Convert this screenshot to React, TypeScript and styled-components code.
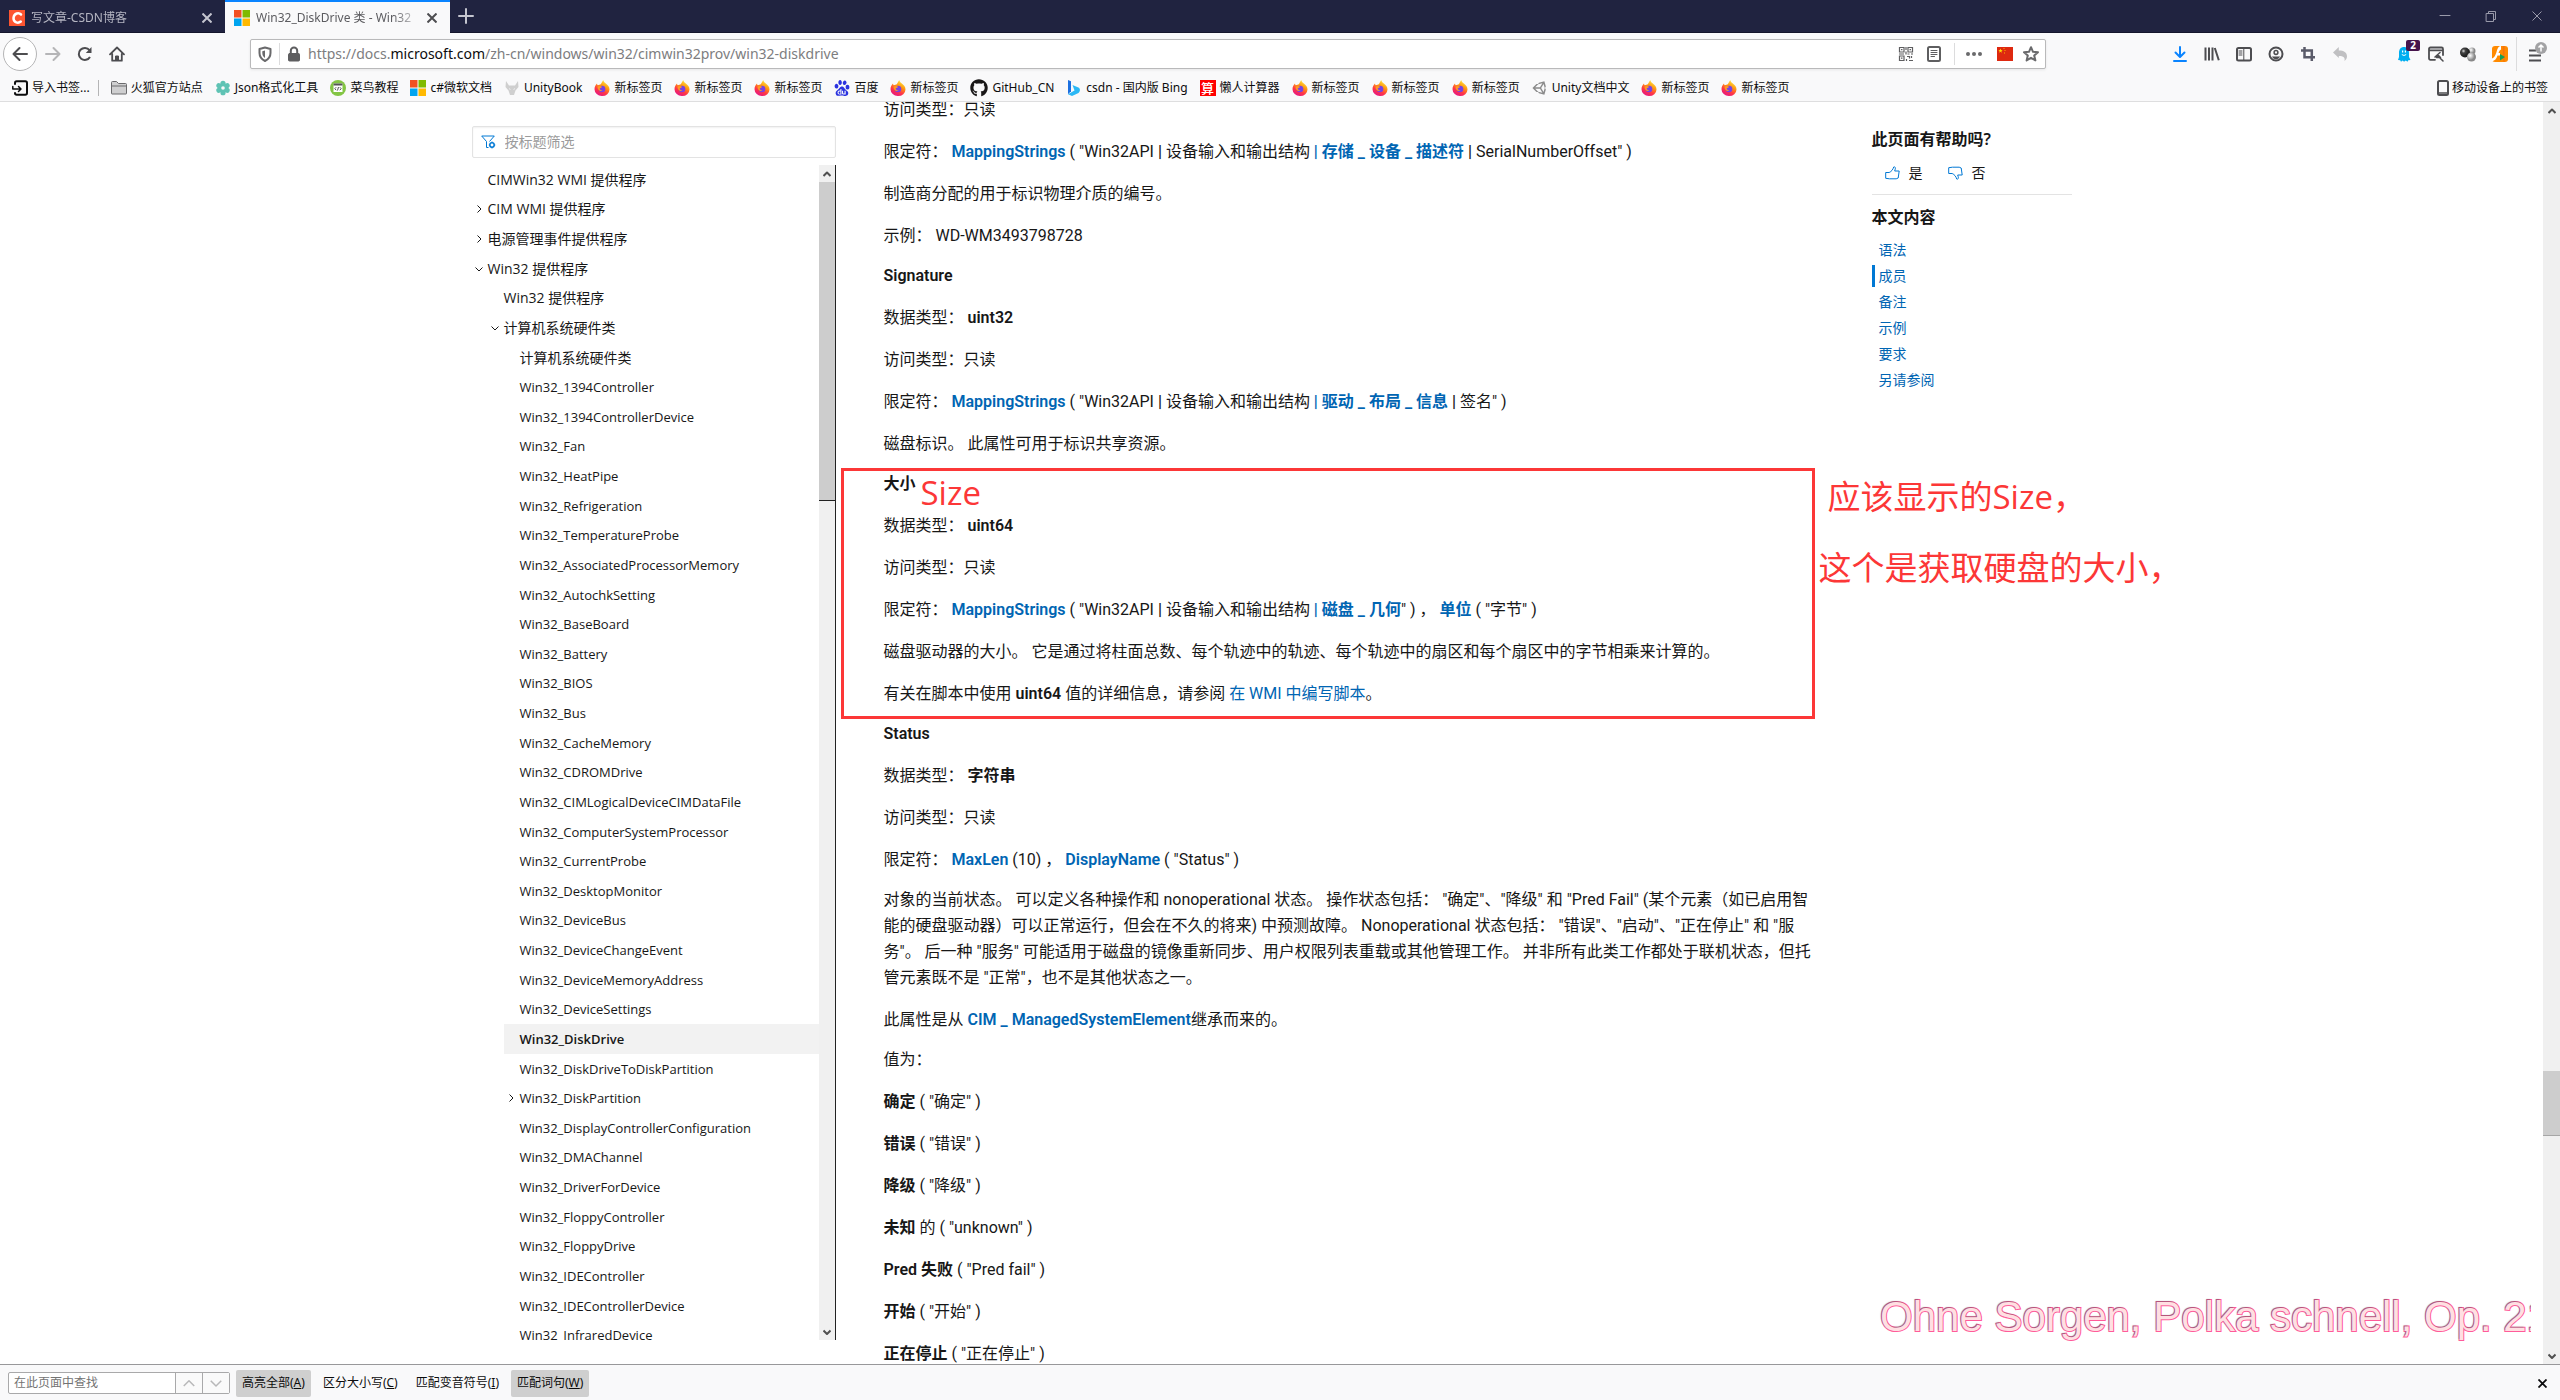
import React from 'react';
import styled, { createGlobalStyle, css } from 'styled-components';
import { FaGithub, FaUnity } from 'react-icons/fa';
import { SiBaidu } from 'react-icons/si';

const GlobalStyle = createGlobalStyle`
  * { box-sizing: border-box; }
  body {
    margin: 0;
    overflow: hidden;
    background: #fff;
    color: #171717;
    text-spacing-trim: space-all;
  }
  button, input { font: inherit; color: inherit; }
  button { border: 0; padding: 0; background: none; }
  a { color: inherit; text-decoration: none; }
  svg { display: block; flex: none; }
`;

const uiFont = `'Noto Sans', 'Noto Sans CJK SC', sans-serif`;
const docFont = `Roboto, 'Noto Sans CJK SC', sans-serif`;
const treeFont = `'Open Sans', 'Noto Sans CJK SC', sans-serif`;

/* ---------- window ---------- */

const Window = styled.div`
  display: flex;
  flex-direction: column;
  height: 100vh;
  font-family: ${uiFont};
  font-size: 12px;
  line-height: 16px;
`;

const TabStrip = styled.header`
  display: flex;
  flex: none;
  height: 33px;
  background: #202340;
  border-bottom: 1px solid #14162c;
`;

const Tab = styled.div<{ $active?: boolean }>`
  display: flex;
  align-items: center;
  gap: 6px;
  width: 225px;
  height: 33px;
  padding: 0 10px 0 9px;
  color: #b4b5c1;
  border-top: 2px solid transparent;
  ${(p) => p.$active && css`
    background: #f9f9fa;
    color: #5c5c60;
    border-top-color: #0a84ff;
  `}
`;

const TabTitle = styled.span`
  flex: 1;
  overflow: hidden;
  white-space: nowrap;
  mask-image: linear-gradient(to right, #000 84%, transparent 104%);
`;

const IconButton = styled.button<{ $w?: number; $color?: string }>`
  position: relative;
  display: grid;
  place-items: center;
  flex: none;
  width: ${(p) => p.$w ?? 32}px;
  height: 32px;
  color: ${(p) => p.$color ?? '#4d4d50'};
`;

const Spacer = styled.div`
  flex: 1;
`;

const ToolGap = styled.div`
  flex: none;
  width: 32px;
`;

const NavBar = styled.nav`
  display: flex;
  flex: none;
  align-items: center;
  height: 41px;
  padding: 0 3px;
  background: #f9f9fa;
`;

const BackButton = styled.button`
  display: grid;
  place-items: center;
  width: 34px;
  height: 34px;
  border: 1px solid #b5b5b6;
  border-radius: 50%;
  background: #fff;
  color: #4d4d50;
`;

const UrlBar = styled.div`
  display: flex;
  flex: 1;
  align-items: center;
  height: 30px;
  margin: 0 118px 0 117px;
  border: 1px solid #b9b9ba;
  border-radius: 2px;
  background: #fff;
  box-shadow: 0 1px 3px rgba(0, 0, 0, 0.08);
`;

const Address = styled.div`
  flex: 1;
  font-size: 14px;
  line-height: 20px;
  white-space: nowrap;
  color: #7d7d80;
  strong { font-weight: 400; color: #0c0c0d; }
`;

const Divider = styled.span<{ $h?: number }>`
  flex: none;
  width: 1px;
  height: ${(p) => p.$h ?? 22}px;
  background: #dcdcdd;
`;

const Badge = styled.span`
  position: absolute;
  top: 2px;
  right: 0;
  width: 14px;
  height: 11px;
  border-radius: 2px;
  background: #46144c;
  color: #fff;
  font-size: 10px;
  font-weight: 700;
  line-height: 11px;
  text-align: center;
`;

const BookmarkBar = styled.div`
  display: flex;
  flex: none;
  align-items: center;
  gap: 12px;
  height: 28px;
  padding: 0 12px;
  border-bottom: 1px solid #dededf;
  background: #f9f9fa;
  color: #0c0c0d;
`;

const Bookmark = styled.a`
  display: flex;
  align-items: center;
  gap: 4px;
  white-space: nowrap;
`;

const ImportBookmark = styled(Bookmark)`
  padding-right: 8px;
  border-right: 1px solid #b5b5b6;
`;

const MobileBookmark = styled(Bookmark)`
  gap: 3px;
  margin-left: auto;
`;

const Tile = styled.span<{ $bg: string; $fg?: string }>`
  display: grid;
  place-items: center;
  width: 16px;
  height: 16px;
  background: ${(p) => p.$bg};
  color: ${(p) => p.$fg ?? '#fff'};
  font-size: 13px;
  line-height: 16px;
  font-weight: 500;
`;

/* ---------- page ---------- */

const Viewport = styled.div`
  display: flex;
  flex: 1;
  min-height: 0;
  overflow: hidden;
`;

const Page = styled.div`
  flex: 1;
  min-width: 0;
  height: 100%;
`;

const Columns = styled.div`
  display: flex;
  max-width: 1600px;
  height: 100%;
  margin: 0 auto;
`;

const Sidebar = styled.aside`
  display: flex;
  flex: none;
  flex-direction: column;
  gap: 7px;
  width: 364px;
  padding: 24px 0;
`;

const FilterBox = styled.label`
  display: flex;
  align-items: center;
  gap: 9px;
  height: 32px;
  padding: 0 8px;
  border: 1px solid #e3e3e3;
  border-radius: 2px;
  box-shadow: inset 0 1px 2px rgba(0, 0, 0, 0.06);
  font-size: 14px;
`;

const PlainInput = styled.input`
  flex: 1;
  min-width: 0;
  border: 0;
  padding: 0;
  outline: 0;
  background: none;
  &::placeholder { color: #9b9b9b; opacity: 1; }
`;

const TreePane = styled.div`
  display: flex;
  flex: 1;
  min-height: 0;
  overflow: hidden;
`;

const Tree = styled.ul`
  display: flex;
  flex: 1;
  flex-direction: column;
  height: calc(100% + 10px);
  margin: 0;
  padding: 0;
  list-style: none;
  font-family: ${treeFont};
`;

const TreeItem = styled.li<{ $level: number; $active?: boolean }>`
  flex: 1 0 0;
  display: flex;
  align-items: center;
  margin-left: ${(p) => p.$level * 16}px;
  background: ${(p) => (p.$active ? '#f2f2f2' : 'transparent')};
  font-weight: ${(p) => (p.$active ? 600 : 400)};
`;

const TreeLink = styled.a<{ $latin?: boolean }>`
  font-size: ${(p) => (p.$latin ? 13 : 14)}px;
  line-height: 20px;
`;

const Caret = styled.span`
  display: grid;
  place-items: center;
  width: 16px;
  padding-right: 2px;
`;

const ScrollTrack = styled.div<{ $edge?: string }>`
  display: flex;
  flex: none;
  flex-direction: column;
  width: 17px;
  background: #f0f0f0;
  border-right: ${(p) => (p.$edge ? `1px solid ${p.$edge}` : '0')};
`;

const ScrollArrow = styled.button`
  display: grid;
  place-items: center;
  height: 17px;
  color: #505050;
`;

const ScrollPart = styled.div<{ $grow: number }>`
  flex: ${(p) => p.$grow} 0 0;
`;

const ScrollThumb = styled(ScrollPart)<{ $edge: string }>`
  background: #cdcdcd;
  border-bottom: 1px solid ${(p) => p.$edge};
`;

const Article = styled.main`
  display: flex;
  flex: 1;
  flex-direction: column;
  gap: 14px;
  min-width: 0;
  margin: -5px 52px 0 48px;
  font-family: ${docFont};
  font-size: 16px;
  line-height: 26px;
`;

const Block = styled.section`
  position: relative;
  display: flex;
  flex: none;
  flex-direction: column;
  gap: 16px;
`;

const P = styled.p`
  margin: 0;
  b { font-weight: 600; }
`;

const Name = styled.h3`
  margin: 0;
  font: inherit;
  font-weight: 600;
`;

const Ref = styled.a<{ $strong?: boolean }>`
  color: #0065b3;
  font-weight: ${(p) => (p.$strong ? 600 : 400)};
`;

const MarkBox = styled.div`
  position: absolute;
  inset: -3px 5px -12px -43px;
  border: 3px solid #fc3737;
`;

const Note = styled.span<{ $x: number; $y: number }>`
  position: absolute;
  left: ${(p) => p.$x}px;
  top: ${(p) => p.$y}px;
  color: #fc3737;
  font-family: ${treeFont};
  font-size: 33px;
  line-height: 44px;
  white-space: nowrap;
`;

const Rail = styled.aside`
  flex: none;
  width: 200px;
  padding-top: 25px;
  font-size: 14px;
`;

const RailTitle = styled.h2`
  margin: 0;
  font-size: 16px;
  font-weight: 600;
  line-height: 24px;
`;

const Votes = styled.div`
  display: flex;
  gap: 25px;
  margin: 10px 0;
  padding: 0 13px 9px;
  border-bottom: 1px solid #e3e3e3;
`;

const Vote = styled.button`
  display: flex;
  align-items: center;
  gap: 9px;
  line-height: 24px;
`;

const Toc = styled.ul`
  margin: 10px 0 0;
  padding: 0;
  list-style: none;
`;

const TocItem = styled.li<{ $active?: boolean }>`
  margin: 0 0 4px;
  padding-left: 4px;
  border-left: 3px solid ${(p) => (p.$active ? '#0078d4' : 'transparent')};
  line-height: 22px;
`;

const Watermark = styled.div`
  position: absolute;
  right: 29px;
  bottom: 58px;
  width: 653px;
  padding-left: 2px;
  overflow: hidden;
  white-space: nowrap;
  font-family: 'Liberation Sans', sans-serif;
  font-size: 42px;
  line-height: 50px;
  color: #ffdfe2;
  paint-order: stroke fill;
  -webkit-text-stroke: 2px #ff5c9a;
  text-shadow: -1px -1px 1px rgba(90, 80, 90, 0.5);
`;

/* ---------- find bar ---------- */

const FindBar = styled.footer`
  display: flex;
  flex: none;
  align-items: center;
  gap: 6px;
  height: 36px;
  padding: 1px 9px 0 8px;
  border-top: 1px solid #98989a;
  background: #f9f9fa;
  color: #0c0c0d;
`;

const FindField = styled.div`
  display: flex;
  width: 222px;
  height: 22px;
  border: 1px solid #a9a9aa;
  border-radius: 2px;
  background: #fff;
  input { padding-left: 5px; }
  input::placeholder { color: #737373; }
`;

const StepButton = styled.button`
  display: grid;
  place-items: center;
  width: 27px;
  border-left: 1px solid #a9a9aa;
  background: #fafafa;
  color: #b8b8b9;
`;

const Toggle = styled.button<{ $on?: boolean }>`
  height: 27px;
  padding: 0 6px;
  border-radius: 2px;
  background: ${(p) => (p.$on ? '#cfcfcf' : 'transparent')};
`;

/* ---------- icons ---------- */

const stroke = { fill: 'none', stroke: 'currentColor', strokeWidth: 2, strokeLinecap: 'round', strokeLinejoin: 'round' } as const;

const Svg = ({ d, size = 16, w = 2 }: { d: string; size?: number; w?: number }) => (
  <svg width={size} height={size} viewBox="0 0 16 16" {...stroke} strokeWidth={w}><path d={d} /></svg>
);

const Cross = ({ size = 10, w = 2 }: { size?: number; w?: number }) => (
  <svg width={size} height={size} viewBox="0 0 10 10" {...stroke} strokeWidth={w} strokeLinecap="butt"><path d="M0.5 0.5l9 9M9.5 0.5l-9 9" /></svg>
);

const Chevron = ({ dir, size = 8, w = 1 }: { dir: 'up' | 'down' | 'right'; size?: number; w?: number }) => (
  <svg width={size} height={size} viewBox="0 0 8 8" {...stroke} strokeWidth={w} strokeLinecap="butt">
    <path d={dir === 'up' ? 'M0.5 6L4 2.5L7.5 6' : dir === 'down' ? 'M0.5 2.5L4 6L7.5 2.5' : 'M2.5 0.5L6 4L2.5 7.5'} />
  </svg>
);

const MsLogo = () => (
  <svg width="16" height="16" viewBox="0 0 16 16">
    <path fill="#f25022" d="M0 0h7.5v7.5H0z" /><path fill="#7fba00" d="M8.5 0H16v7.5H8.5z" />
    <path fill="#00a4ef" d="M0 8.5h7.5V16H0z" /><path fill="#ffb900" d="M8.5 8.5H16V16H8.5z" />
  </svg>
);

const FirefoxLogo = () => (
  <svg width="16" height="16" viewBox="0 0 16 16">
    <defs>
      <linearGradient id="fx" x1="0.8" y1="0" x2="0.3" y2="1">
        <stop offset="0" stopColor="#fff44f" /><stop offset="0.4" stopColor="#ff980e" />
        <stop offset="0.7" stopColor="#ff3647" /><stop offset="1" stopColor="#e31587" />
      </linearGradient>
    </defs>
    <path fill="url(#fx)" d="M9.2 0c.3 1.700 1.300 2.300 2.600 3.500 2 1.700 3.700 3 3.700 6A7.400 6.500 0 0 1 8 16 7.400 6.700 0 0 1 .5 9.300C.5 6.500 1.500 5 3 3.500c0 .8.200 1.300.8 1.700C5 4.800 6 4.600 6.800 4.200 7.600 3 8.200 1.500 9.200 0z" />
    <circle cx="8" cy="9" r="3.300" fill="#7542e5" />
    <path fill="#ff9a1f" d="M3.500 6.500c1.500-.8 3.300-.8 4.800.5-1 .3-1.300 1-2.600 1.200.2 1.500 1.300 2.300 3 2.100-2 1.600-5.300.3-5.200-3.800z" />
  </svg>
);

const BingLogo = () => (
  <svg width="16" height="16" viewBox="-1 0 16 16">
    <path fill="#1b6fe0" d="M1 0l3 1.200v10L1 14.200z" /><path fill="#2bb8f5" d="M5.500 5L12 7.800c1.500 1.200 1.200 4-.5 5.200L5 16l-4-1.800 6.500-3.700z" />
  </svg>
);

const FlowerLogo = () => (
  <svg width="16" height="16" viewBox="0 0 16 16">
    <g fill="#5fc3b4">
      {[0, 60, 120, 180, 240, 300].map((a) => <circle key={a} cx="8" cy="3.300" r="2.600" transform={`rotate(${a} 8 8)`} />)}
      <circle cx="8" cy="8" r="4.500" />
    </g>
    <circle cx="8" cy="8" r="1.800" fill="#f9f9fa" />
  </svg>
);

const RunoobLogo = () => (
  <svg width="16" height="16" viewBox="0 0 16 16">
    <circle cx="8" cy="8" r="8" fill="#83c544" /><path fill="#fff" d="M3.500 3.500h9v8.500h-9z" /><path fill="#555" d="M3.500 3.500h9V5.500h-9z" />
    <path d="M6.200 7.200L4.800 8.700l1.400 1.500M9.800 7.200l1.400 1.500-1.400 1.500M8.500 7l-1 3.500" fill="none" stroke="#555" />
  </svg>
);

const WolfLogo = () => (
  <svg width="16" height="16" viewBox="0 0 16 16" fill="#cfcfcf">
    <path d="M2 1l3 4.500h6L14 1l.5 6-3 3.500L10 15H6L4.500 10.500l-3-3.500z" /><path fill="#f9f9fa" d="M5 8l2 1.500H5.500zM11 8L9 9.500h1.500z" />
  </svg>
);

const FolderIcon = () => (
  <svg width="16" height="16" viewBox="0 0 16 16" fill="#cfcfd0" stroke="#6a6a6c">
    <path d="M.5 13.500v-11q0-1 1-1H5.500L7.500 3.500h7q1 0 1 1v9q0 .5-.5.5H1q-.5 0-.5-.5zM.5 6h15" />
  </svg>
);

const ImportIcon = () => (
  <svg width="16" height="16" viewBox="0 0 16 16" {...stroke}>
    <path d="M3 4V3q0-1.700 1.700-1.700h8.600Q15 1.300 15 3v10q0 1.700-1.700 1.700H4.700Q3 14.700 3 13" /><path strokeWidth="1.500" d="M.8 9h8M6.500 6.500L9 9l-2.500 2.500M.8 9V6.500" />
  </svg>
);

const ShieldIcon = () => (
  <svg width="16" height="16" viewBox="0 0 16 16" {...stroke}>
    <path d="M8 1.500L13.500 3v4c0 4-2.500 6.500-5.500 8-3-1.500-5.500-4-5.500-8V3z" /><path fill="currentColor" stroke="none" d="M8 4.500v7.500C6.300 10.800 5.300 9.300 5.300 7V5.200z" />
  </svg>
);

const LockIcon = () => (
  <svg width="16" height="16" viewBox="0 0 16 16" {...stroke}>
    <path d="M4.800 8V4.800a3.200 3.200 0 0 1 6.400 0V8" /><rect x="2.500" y="7.500" width="11" height="7.500" rx="1" fill="currentColor" strokeWidth="1" />
  </svg>
);

const QrIcon = () => (
  <svg width="16" height="16" viewBox="0 0 16 16" fill="none" stroke="currentColor" strokeWidth="1.200">
    <path d="M1.500 1.500h4.500v4.500H1.500zM10 1.500h4.500v4.500H10zM1.500 10h4.500v4.500H1.500z" />
    <path d="M3 3.700h1.500M11.500 3.700H13M3 12.200h1.500M8 1v3M8 5.500v3M1 8h5M9.500 8h2M13 8h2M9 10.500h2.500v2M13.500 10v2M8.500 13v2M11 14.500h4" />
  </svg>
);

const ReaderIcon = () => (
  <svg width="16" height="16" viewBox="0 0 16 16" {...stroke}>
    <rect x="2" y="1" width="12" height="14" rx="1.500" /><path strokeWidth="1" d="M5 4.500h6M5 6.500h6M5 8.500h6M5 10.500h3.500" />
  </svg>
);

const DotsIcon = () => (
  <svg width="16" height="16" viewBox="0 0 16 16" fill="currentColor"><circle cx="2" cy="8" r="2" /><circle cx="8" cy="8" r="2" /><circle cx="14" cy="8" r="2" /></svg>
);

const FlagIcon = () => (
  <svg width="16" height="14" viewBox="0 0 16 14"><path fill="#de2910" d="M0 0h16v14H0z" />
    <path fill="#ffde00" d="M3.500 1.500l.6 1.600h1.600L4.400 4.100l.5 1.700-1.400-1-1.400 1 .5-1.700-1.300-1h1.600z" />
    <path fill="#ffb000" d="M6.500 1h1v1h-1zM7.500 3h1v1h-1zM7 5.500h1v1H7z" />
  </svg>
);

const HomeIcon = () => (
  <svg width="16" height="16" viewBox="0 0 16 16" {...stroke} strokeWidth="1.800">
    <path d="M1 8.300L8 1.500l7 6.800M3.200 8v6.700h9.600V8" /><path d="M6.500 14V10h3v4z" fill="currentColor" strokeWidth="1" />
  </svg>
);

const ReloadIcon = () => (
  <svg width="16" height="16" viewBox="0 0 16 16" {...stroke}>
    <path strokeLinecap="butt" d="M13 11A6 6 0 1 1 12.500 4.200" /><path d="M14.500 1v6H8.800z" fill="currentColor" stroke="none" />
  </svg>
);

const LibraryIcon = () => (
  <svg width="16" height="16" viewBox="0 0 16 16" {...stroke} strokeLinecap="butt"><path d="M1.500 1.500v13M5 1.500v13M8.500 1.500v13M10.800 2l4 12.300" /></svg>
);

const SidebarIcon = () => (
  <svg width="16" height="16" viewBox="0 0 16 16" {...stroke}><rect x="1" y="2" width="14" height="12.500" rx="1.500" /><path strokeWidth="1" d="M7.800 2.500v11.500M3 5h3M3 7h3M3 9h3" /></svg>
);

const AccountIcon = () => (
  <svg width="16" height="16" viewBox="0 0 16 16" {...stroke}><circle cx="8" cy="8" r="6.500" /><circle cx="8" cy="6.500" r="1.900" strokeWidth="1.500" /><path d="M4 10.500h8c-.5 1.500-2 2.800-4 2.800s-3.500-1.300-4-2.800z" fill="currentColor" stroke="none" /></svg>
);

const CropIcon = () => (
  <svg width="16" height="16" viewBox="0 0 16 16" {...stroke} strokeWidth="2.500" strokeLinecap="butt" strokeLinejoin="miter"><path d="M1 4.500h10.800V15M4.500 1v10.300H15" /></svg>
);

const UndoIcon = () => (
  <svg width="16" height="16" viewBox="0 0 16 16" fill="currentColor"><path d="M1 6.500L6.800 1v3.500c5 0 8.200 2 8.200 5.800 0 2.200-1 3.700-2.500 4.700.7-3.300-.7-5-5.700-5V12z" /></svg>
);

const GhostIcon = () => (
  <svg width="16" height="16" viewBox="0 0 16 16"><path fill="#00aef0" d="M3 7c0-4 2-6 5-6s5 2 5 6v4l1.500 3-2.200.3-.8 1.400-1.700-1.200L8 15.700l-1.300-1.200L5 15.700l-.8-1.400L2 14l1-3z" />
    <path fill="#fff" d="M6 4.500h1.200v2H6zM8.800 4.500H10v2H8.800z" /><path d="M5.800 8.500q2.200 2 4.400 0" fill="none" stroke="#fff" /></svg>
);

const EditWindowIcon = () => (
  <svg width="16" height="16" viewBox="0 0 16 16" {...stroke} strokeWidth="1.800"><path d="M7 13.800H2.500Q1 13.800 1 12.300V3Q1 1.500 2.500 1.500h11Q15 1.500 15 3V9M1.500 4.300h13" /><path strokeWidth="1.500" d="M7 11l5-4.500M8.500 11.500l2-2 2 2zM12 12l3 3" /></svg>
);

const BallsIcon = () => (
  <svg width="18" height="16" viewBox="0 0 18 16">
    <defs>
      <radialGradient id="b1" cx="0.35" cy="0.35"><stop offset="0" stopColor="#ddd" /><stop offset="0.4" stopColor="#444" /><stop offset="1" stopColor="#222" /></radialGradient>
      <radialGradient id="b2" cx="0.35" cy="0.35"><stop offset="0" stopColor="#fff" /><stop offset="1" stopColor="#888" /></radialGradient>
    </defs>
    <circle cx="13" cy="5" r="3.500" fill="url(#b2)" /><circle cx="6" cy="6.500" r="5" fill="url(#b1)" /><circle cx="12.500" cy="11" r="4.500" fill="url(#b2)" />
  </svg>
);

const FlashIcon = () => (
  <svg width="16" height="16" viewBox="0 0 16 16"><rect width="16" height="16" rx="3" fill="#ff8a00" /><path fill="#fff" d="M9 0C5.500 0 5.500 4 4 7.500 3 10 2 12 0 12.500V15c3 0 4.500-2.500 5.500-5.500H8V7H6.500C7.200 5 8 3.800 9 3.500z" /><path fill="#d9472b" d="M10.500 0h2v16h-1z" opacity=".3" /><path fill="#12a05a" d="M8 8l5 3-5 3.500z" /></svg>
);

const MenuIcon = () => (
  <svg width="20" height="24" viewBox="0 0 20 24" {...stroke} strokeLinecap="butt"><path d="M2 8.500h7M2 13.500h12M2 18.500h12" /><circle cx="14" cy="6" r="6" fill="#a2a2a4" stroke="none" /><path stroke="#fff" strokeWidth="1.500" d="M14 9.500V3.500M11.500 5.500L14 3l2.500 2.500" /></svg>
);

const PhoneIcon = () => (
  <svg width="12" height="16" viewBox="0 0 12 16" {...stroke} stroke="#4d4d50"><rect x="1" y="1" width="10" height="14" rx="1.500" /><path d="M1 13h10" strokeWidth="1.500" /></svg>
);

const FilterIcon = () => (
  <svg width="15" height="14" viewBox="0 0 15 14" fill="none" stroke="#0078d4"><path d="M.7 1h12.600L8.500 6.500M.7 1L5.500 6.500v6h2" /><circle cx="11" cy="10" r="2.200" strokeWidth="1.500" /><path d="M11 6.500v1M11 12.500v1M7.800 10h.9M13.300 10h1" /></svg>
);

const ThumbIcon = ({ down }: { down?: boolean }) => (
  <svg width="15" height="14" viewBox="0 0 15 14" fill="none" stroke="#0078d4">
    <path transform={down ? 'matrix(1 0 0 -1 0 14)' : undefined} d="M.7 6.500h3.500C6.500 5.500 8 3.500 8.700 1c1.600-.6 2 1 1.500 2.200L9.700 5h4.500l-1 7-2 .8H4.500L.7 12.300z" />
  </svg>
);

const StarIcon = () => <Svg d="M8 1.200l2 4.600 5 .4-3.800 3.300 1.200 4.900L8 11.800l-4.400 2.600 1.200-4.900L1 6.200l5-.4z" />;

/* ---------- data ---------- */

const fx = () => ({ icon: <FirefoxLogo />, label: '新标签页' });

const bookmarks = [
  { icon: <FolderIcon />, label: '火狐官方站点' },
  { icon: <FlowerLogo />, label: 'Json格式化工具' },
  { icon: <RunoobLogo />, label: '菜鸟教程' },
  { icon: <MsLogo />, label: 'c#微软文档' },
  { icon: <WolfLogo />, label: 'UnityBook' },
  fx(), fx(), fx(),
  { icon: <SiBaidu size={16} color="#2a32df" />, label: '百度' },
  fx(),
  { icon: <FaGithub size={18} color="#191717" />, label: 'GitHub_CN' },
  { icon: <BingLogo />, label: 'csdn - 国内版 Bing' },
  { icon: <Tile $bg="#f00">算</Tile>, label: '懒人计算器' },
  fx(), fx(), fx(),
  { icon: <FaUnity size={16} color="#8b8b8b" />, label: 'Unity文档中文' },
  fx(), fx(),
];

type Node = { label: string; level: number; caret?: 'right' | 'down'; latin?: boolean; active?: boolean };

const classes = [
  '1394Controller', '1394ControllerDevice', 'Fan', 'HeatPipe', 'Refrigeration', 'TemperatureProbe',
  'AssociatedProcessorMemory', 'AutochkSetting', 'BaseBoard', 'Battery', 'BIOS', 'Bus', 'CacheMemory',
  'CDROMDrive', 'CIMLogicalDeviceCIMDataFile', 'ComputerSystemProcessor', 'CurrentProbe', 'DesktopMonitor',
  'DeviceBus', 'DeviceChangeEvent', 'DeviceMemoryAddress', 'DeviceSettings', 'DiskDrive',
  'DiskDriveToDiskPartition', 'DiskPartition', 'DisplayControllerConfiguration', 'DMAChannel',
  'DriverForDevice', 'FloppyController', 'FloppyDrive', 'IDEController', 'IDEControllerDevice', 'InfraredDevice',
];

const nodes: Node[] = [
  { label: 'CIMWin32 WMI 提供程序', level: 0 },
  { label: 'CIM WMI 提供程序', level: 0, caret: 'right' },
  { label: '电源管理事件提供程序', level: 0, caret: 'right' },
  { label: 'Win32 提供程序', level: 0, caret: 'down' },
  { label: 'Win32 提供程序', level: 1 },
  { label: '计算机系统硬件类', level: 1, caret: 'down' },
  { label: '计算机系统硬件类', level: 2 },
  ...classes.map((c): Node => ({
    label: `Win32_${c}`,
    level: 2,
    latin: true,
    active: c === 'DiskDrive',
    caret: c === 'DiskPartition' ? 'right' : undefined,
  })),
];

const toc = ['语法', '成员', '备注', '示例', '要求', '另请参阅'];

const states: [string, string, string][] = [
  ['确定', '', '确定'], ['错误', '', '错误'], ['降级', '', '降级'], ['未知', ' 的', 'unknown'],
  ['Pred 失败', '', 'Pred fail'], ['开始', '', '开始'], ['正在停止', '', '正在停止'],
];

const Mapping = () => (
  <>限定符： <Ref href="#" $strong>MappingStrings</Ref> ( "Win32API <b>|</b> 设备输入和输出结构 <Ref href="#" $strong>| </Ref></>
);

export default function App() {
  return (
    <Window>
      <GlobalStyle />
      <TabStrip>
        <Tab>
          <Tile $bg="#fc5531"><Svg d="M12 4.500C10 2.500 5 2.800 4.500 8c0 5 5 5.500 7.300 3.500" w={2.500} /></Tile>
          <TabTitle>写文章-CSDN博客</TabTitle>
          <IconButton $w={16} $color="#c4c5cf" aria-label="关闭标签页"><Cross /></IconButton>
        </Tab>
        <Tab $active>
          <MsLogo />
          <TabTitle>Win32_DiskDrive 类 - Win32</TabTitle>
          <IconButton $w={16} aria-label="关闭标签页"><Cross /></IconButton>
        </Tab>
        <IconButton $color="#c4c5cf" aria-label="新建标签页"><Svg d="M8 1v14M1 8h14" /></IconButton>
        <Spacer />
        <IconButton $w={46} $color="#9a9bab" aria-label="最小化"><Svg d="M3 7.500h10" w={1} /></IconButton>
        <IconButton $w={46} $color="#9a9bab" aria-label="还原"><Svg d="M3.500 5.500h7v8h-7zM5.500 5V3.500h7v8H11" w={1} /></IconButton>
        <IconButton $w={46} $color="#9a9bab" aria-label="关闭"><Cross w={1} /></IconButton>
      </TabStrip>

      <NavBar>
        <BackButton aria-label="后退"><Svg d="M15 8H1.500M7.500 2L1.500 8l6 6" /></BackButton>
        <IconButton $color="#b5b5b7" aria-label="前进"><Svg d="M1 8h13.500M8.500 2l6 6-6 6" /></IconButton>
        <IconButton aria-label="刷新"><ReloadIcon /></IconButton>
        <IconButton aria-label="主页"><HomeIcon /></IconButton>
        <UrlBar>
          <IconButton $w={28} $color="#6a6a6c" aria-label="跟踪保护"><ShieldIcon /></IconButton>
          <Divider />
          <IconButton $w={28} $color="#5e5e60" aria-label="安全连接"><LockIcon /></IconButton>
          <Address>https://docs.<strong>microsoft.com</strong>/zh-cn/windows/win32/cimwin32prov/win32-diskdrive</Address>
          <IconButton $w={16} $color="#5e5e60" aria-label="二维码"><QrIcon /></IconButton>
          <IconButton $w={40} $color="#5e5e60" aria-label="阅读模式"><ReaderIcon /></IconButton>
          <Divider />
          <IconButton $w={38} $color="#6a6a6c" aria-label="页面操作"><DotsIcon /></IconButton>
          <IconButton $w={24} aria-label="国旗"><FlagIcon /></IconButton>
          <IconButton $w={28} $color="#6a6a6c" aria-label="添加书签"><StarIcon /></IconButton>
        </UrlBar>
        <IconButton $color="#0a84ff" aria-label="下载"><Svg d="M8 1v9.500M3.500 6.500L8 11l4.500-4.500M2 15h12" /></IconButton>
        <IconButton aria-label="书架"><LibraryIcon /></IconButton>
        <IconButton aria-label="侧栏"><SidebarIcon /></IconButton>
        <IconButton aria-label="账户"><AccountIcon /></IconButton>
        <IconButton $color="#5a5b69" aria-label="截图"><CropIcon /></IconButton>
        <IconButton $color="#c0c0c2" aria-label="撤销"><UndoIcon /></IconButton>
        <ToolGap />
        <IconButton aria-label="Ghostery"><GhostIcon /><Badge>2</Badge></IconButton>
        <IconButton aria-label="编辑"><EditWindowIcon /></IconButton>
        <IconButton aria-label="扩展"><BallsIcon /></IconButton>
        <IconButton aria-label="Flash"><FlashIcon /></IconButton>
        <Divider $h={34} />
        <IconButton $w={40} aria-label="菜单"><MenuIcon /></IconButton>
      </NavBar>

      <BookmarkBar>
        <ImportBookmark href="#"><ImportIcon />导入书签...</ImportBookmark>
        {bookmarks.map((b, i) => <Bookmark key={i} href="#">{b.icon}{b.label}</Bookmark>)}
        <MobileBookmark href="#"><PhoneIcon />移动设备上的书签</MobileBookmark>
      </BookmarkBar>

      <Viewport>
        <Page>
          <Columns>
            <Sidebar>
              <FilterBox>
                <FilterIcon />
                <PlainInput placeholder="按标题筛选" aria-label="按标题筛选" />
              </FilterBox>
              <TreePane>
                <Tree>
                  {nodes.map((n, i) => (
                    <TreeItem key={i} $level={n.level} $active={n.active}>
                      <Caret>{n.caret && <Chevron dir={n.caret} />}</Caret>
                      <TreeLink href="#" $latin={n.latin}>{n.label}</TreeLink>
                    </TreeItem>
                  ))}
                </Tree>
                <ScrollTrack $edge="#222">
                  <ScrollArrow aria-label="向上滚动"><Chevron dir="up" w={2} /></ScrollArrow>
                  <ScrollThumb $grow={318} $edge="#222" />
                  <ScrollPart $grow={823} />
                  <ScrollArrow aria-label="向下滚动"><Chevron dir="down" w={2} /></ScrollArrow>
                </ScrollTrack>
              </TreePane>
            </Sidebar>

            <Article>
              <Block>
                <P>访问类型：只读</P>
                <P><Mapping /><Ref href="#" $strong>存储 _ 设备 _ 描述符</Ref> <b>|</b> SerialNumberOffset" )</P>
                <P>制造商分配的用于标识物理介质的编号。</P>
                <P>示例： WD-WM3493798728</P>
              </Block>
              <Block>
                <Name>Signature</Name>
                <P>数据类型： <b>uint32</b></P>
                <P>访问类型：只读</P>
                <P><Mapping /><Ref href="#" $strong>驱动 _ 布局 _ 信息</Ref> <b>|</b> 签名" )</P>
                <P>磁盘标识。 此属性可用于标识共享资源。</P>
              </Block>
              <Block>
                <Name>大小</Name>
                <P>数据类型： <b>uint64</b></P>
                <P>访问类型：只读</P>
                <P><Mapping /><Ref href="#" $strong>磁盘 _ 几何</Ref>" ) ， <Ref href="#" $strong>单位</Ref> ( "字节" )</P>
                <P>磁盘驱动器的大小。 它是通过将柱面总数、每个轨迹中的轨迹、每个轨迹中的扇区和每个扇区中的字节相乘来计算的。</P>
                <P>有关在脚本中使用 <b>uint64</b> 值的详细信息，请参阅 <Ref href="#">在 WMI 中编写脚本</Ref>。</P>
                <MarkBox />
                <Note $x={37} $y={0}>Size</Note>
                <Note $x={944} $y={4}>应该显示的Size，</Note>
                <Note $x={935} $y={75}>这个是获取硬盘的大小，</Note>
              </Block>
              <Block>
                <Name>Status</Name>
                <P>数据类型： <b>字符串</b></P>
                <P>访问类型：只读</P>
                <P>限定符： <Ref href="#" $strong>MaxLen</Ref> (10) ， <Ref href="#" $strong>DisplayName</Ref> ( "Status" )</P>
              </Block>
              <Block>
                <P>对象的当前状态。 可以定义各种操作和 nonoperational 状态。 操作状态包括： "确定"、"降级" 和 "Pred Fail" (某个元素（如已启用智能的硬盘驱动器）可以正常运行，但会在不久的将来) 中预测故障。 Nonoperational 状态包括： "错误"、"启动"、"正在停止" 和 "服务"。 后一种 "服务" 可能适用于磁盘的镜像重新同步、用户权限列表重载或其他管理工作。 并非所有此类工作都处于联机状态，但托管元素既不是 "正常"，也不是其他状态之一。</P>
                <P>此属性是从 <Ref href="#" $strong>CIM _ ManagedSystemElement</Ref>继承而来的。</P>
              </Block>
              <Block>
                <P>值为：</P>
                {states.map(([name, tail, value]) => (
                  <P key={name}><b>{name}</b>{tail} ( "{value}" )</P>
                ))}
              </Block>
            </Article>

            <Rail>
              <RailTitle>此页面有帮助吗?</RailTitle>
              <Votes>
                <Vote><ThumbIcon />是</Vote>
                <Vote><ThumbIcon down />否</Vote>
              </Votes>
              <RailTitle>本文内容</RailTitle>
              <Toc>
                {toc.map((t) => (
                  <TocItem key={t} $active={t === '成员'}><Ref href="#">{t}</Ref></TocItem>
                ))}
              </Toc>
            </Rail>
          </Columns>
        </Page>
        <ScrollTrack>
          <ScrollArrow aria-label="向上滚动"><Chevron dir="up" w={2} /></ScrollArrow>
          <ScrollPart $grow={951} />
          <ScrollThumb $grow={64} $edge="#a6a6a6" />
          <ScrollPart $grow={211} />
          <ScrollArrow aria-label="向下滚动"><Chevron dir="down" w={2} /></ScrollArrow>
        </ScrollTrack>
      </Viewport>

      <FindBar>
        <FindField>
          <PlainInput placeholder="在此页面中查找" aria-label="在此页面中查找" />
          <StepButton aria-label="上一个"><Chevron dir="up" size={12} /></StepButton>
          <StepButton aria-label="下一个"><Chevron dir="down" size={12} /></StepButton>
        </FindField>
        <Toggle $on>高亮全部(<u>A</u>)</Toggle>
        <Toggle>区分大小写(<u>C</u>)</Toggle>
        <Toggle>匹配变音符号(<u>I</u>)</Toggle>
        <Toggle $on>匹配词句(<u>W</u>)</Toggle>
        <Spacer />
        <IconButton $w={18} $color="#0c0c0d" aria-label="关闭查找栏"><Cross size={9} /></IconButton>
      </FindBar>
      <Watermark>Ohne Sorgen, Polka schnell, Op. 21</Watermark>
    </Window>
  );
}
